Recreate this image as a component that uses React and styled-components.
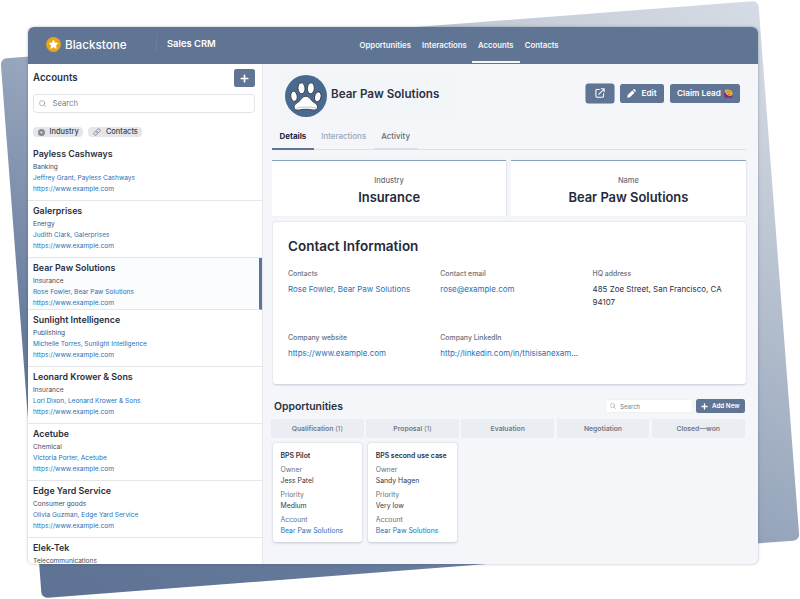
import React from 'react';
import styled, { createGlobalStyle, css } from 'styled-components';

const GlobalStyle = createGlobalStyle`
  * {
    box-sizing: border-box;
  }

  body {
    margin: 0;
    background: #fff;
    color: #2c3142;
    font-family: Inter, 'Liberation Sans', sans-serif;
    overflow: hidden;
  }

  h1, h2, h3, p, ul {
    margin: 0;
    padding: 0;
  }

  a {
    color: #2a70b5;
    text-decoration: none;
  }

  svg {
    display: block;
    flex: none;
  }
`;

const Stage = styled.div`
  position: relative;
  width: 800px;
  height: 599px;
  padding: 27px 42px 34px 28px;
  overflow: hidden;
`;

const Backdrop = styled.div`
  position: absolute;
  left: 20px;
  top: 29px;
  width: 760px;
  height: 541px;
  border-radius: 6px;
  background: linear-gradient(
    216deg,
    #d6dce5 0%,
    #cad1dc 13%,
    #b5bfce 28%,
    #97a6bd 50%,
    #667a9c 76%,
    #5e7294 100%
  );
  transform: rotate(-4.38deg);
`;

const Window = styled.div`
  position: relative;
  display: flex;
  flex-direction: column;
  width: 729.5px;
  height: 537px;
  border-radius: 6px;
  overflow: hidden;
  background: #f4f6fa;
  box-shadow: 0 0 3px rgba(40, 50, 70, 0.35);
`;

const Header = styled.header`
  display: flex;
  flex: none;
  height: 37px;
  padding-left: 18px;
  background: #607494;
  color: #fff;
`;

const Brand = styled.div`
  display: flex;
  align-items: center;
  gap: 4px;
  width: 110px;
  height: 35px;
  font-size: 11.7px;
  font-weight: 500;
`;

const AppName = styled.div`
  height: 19px;
  width: 204px;
  margin-top: 7px;
  margin-left: -0.5px;
  padding-left: 10.5px;
  border-left: 1px solid #6b7e9d;
  font-size: 9.4px;
  font-weight: 600;
  line-height: 19px;
`;

const Nav = styled.nav`
  display: flex;
  gap: 11.2px;
`;

const NavItem = styled.a`
  position: relative;
  color: #f5f7fa;
  font-size: 7.75px;
  font-weight: 600;
  line-height: 36px;

  ${({ $active }) =>
    $active &&
    css`
      &:after {
        content: '';
        position: absolute;
        left: -6px;
        right: -6px;
        bottom: 1px;
        height: 2px;
        background: #f4f6fa;
      }
    `}
`;

const Body = styled.div`
  display: flex;
  flex: 1;
  min-height: 0;
`;

const Sidebar = styled.aside`
  width: 234.5px;
  flex: none;
  overflow: hidden;
  background: #fff;
  border-right: 1px solid #e6e8ec;
`;

const SidebarTop = styled.div`
  padding: 5px 7px 0 5px;
`;

const SidebarHeading = styled.div`
  display: flex;
  align-items: center;
  justify-content: space-between;
  height: 18px;

  h2 {
    margin-top: -1px;
    font-size: 9.7px;
    font-weight: 600;
  }
`;

const Button = styled.button`
  display: flex;
  align-items: center;
  justify-content: center;
  gap: ${({ $gap }) => $gap || 5}px;
  width: ${({ $width }) => $width}px;
  height: ${({ $height }) => $height || 18.5}px;
  padding: 0;
  border: none;
  border-radius: 2.5px;
  background: #607494;
  color: #fff;
  font-family: inherit;
  font-size: ${({ $small }) => ($small ? 6.3 : 8.2)}px;
  font-weight: 600;
  box-shadow: ${({ $ring }) => ($ring ? '0 0 0 0.5px #4f6c97' : 'none')};
`;

const SearchBox = styled.div`
  display: flex;
  align-items: center;
  width: ${({ $small }) => ($small ? '88.5px' : '100%')};
  height: ${({ $small }) => ($small ? 14.5 : 19)}px;
  margin-top: ${({ $small }) => ($small ? 0 : 7)}px;
  padding-left: ${({ $small }) => ($small ? 4 : 5)}px;
  gap: ${({ $small }) => ($small ? 4.5 : 6)}px;
  border: 1px solid ${({ $small }) => ($small ? '#f0f1f4' : '#e2e4e8')};
  border-radius: 3.5px;
  background: #fff;
  color: #7b7f88;
  font-size: ${({ $small }) => ($small ? 6.1 : 7.7)}px;
`;

const Pills = styled.div`
  display: flex;
  gap: 5px;
  margin-top: 14px;
`;

const Pill = styled.span`
  display: flex;
  align-items: center;
  gap: 5px;
  height: 10px;
  padding: 0 4.5px;
  border-radius: 4px;
  background: #e5e6e9;
  color: #3f4451;
  font-size: 7.45px;
  font-weight: 500;
  line-height: 10px;
`;

const AccountList = styled.ul`
  list-style: none;
  margin-top: 6.5px;
`;

const AccountItem = styled.li`
  height: ${({ $active }) => ($active ? 52.5 : 57)}px;
  padding: 3px 5px 0;
  border-bottom: 1px solid #e4e6ea;
  font-size: 6.55px;
  line-height: 11px;
  color: #474c59;
  ${({ $active }) =>
    $active &&
    css`
      background: #fafcfe;
      border-right: 3px solid #607494;
    `}

  h3 {
    margin-bottom: 2px;
    font-size: 8.85px;
    font-weight: 600;
    line-height: 13px;
    color: #2a2f40;
  }

  a {
    display: block;
  }
`;

const Main = styled.main`
  flex: 1;
  min-width: 0;
  padding: 5px 12px 0 9.5px;
`;

const Profile = styled.div`
  display: flex;
  align-items: center;
  justify-content: space-between;
  height: 52px;
  padding-right: 5.5px;
`;

const Company = styled.div`
  display: flex;
  align-items: center;
  gap: 4px;
  width: 174px;
  height: 48px;
  margin: 2px 0 0 7px;
  padding-left: 6px;
  background: #f3f6f9;

  h1 {
    margin-top: -5px;
    font-size: 11.65px;
    font-weight: 600;
    white-space: nowrap;
  }
`;

const Actions = styled.div`
  display: flex;
  align-items: center;
  gap: 6px;
  margin-bottom: 3.5px;
`;

const Tabs = styled.div`
  display: flex;
  height: 29px;
  border-bottom: 1px solid #dcdfe5;
`;

const Tab = styled.div`
  height: 29px;
  padding: 8px 7.5px 0;
  border-bottom: ${({ $active }) =>
    $active ? '2px solid #607494' : '1px solid transparent'};
  color: ${({ $active, $muted }) =>
    $active ? '#20263a' : $muted ? '#99a5b8' : '#666b76'};
  font-size: 7.95px;
  font-weight: ${({ $active }) => ($active ? 700 : 500)};
  line-height: 15px;
  ${({ $hover }) =>
    $hover &&
    css`
      border-bottom: 2px solid #dcdee3;
    `}
`;

const Stats = styled.div`
  display: flex;
  gap: 5px;
  margin-top: 10px;
`;

const Stat = styled.div`
  flex: 1;
  height: 55.5px;
  padding-top: 12.5px;
  border-top: 1px solid #8aa4bf;
  background: #fff;
  box-shadow: 1px 0 1px #e4e8ee;
  text-align: center;

  p {
    color: #6a6f7a;
    font-size: 7.5px;
    font-weight: 500;
    line-height: 13px;
  }

  h2 {
    margin-top: 1.5px;
    font-size: 12.9px;
    font-weight: 600;
    line-height: 19px;
    color: #252a3a;
  }
`;

const ContactCard = styled.section`
  height: 162px;
  margin: 6.5px 0 0 1px;
  padding: 14.5px 15px 0;
  border-radius: 3px;
  background: #fff;
  box-shadow: 0 0.5px 2px rgba(60, 80, 110, 0.25);

  h2 {
    font-size: 13.5px;
    font-weight: 600;
    line-height: 18px;
    color: #252a3a;
  }
`;

const Fields = styled.div`
  display: grid;
  grid-template-columns: 152.3px 152.3px 1fr;
  grid-auto-rows: 64px;
  margin-top: 13.5px;
`;

const Field = styled.div`
  font-size: 7.93px;
  line-height: 13px;
  white-space: ${({ $nowrap }) => ($nowrap ? 'nowrap' : 'normal')};

  span {
    display: block;
    margin-bottom: 3px;
    color: #6a6f7a;
    font-size: 6.9px;
    font-weight: 500;
    line-height: 12px;
  }
`;

const BoardHeader = styled.div`
  display: flex;
  align-items: center;
  gap: 3px;
  margin-top: 14.5px;
  padding: 0 1px 0 2px;
  height: 15px;

  h2 {
    flex: 1;
    font-size: 10.4px;
    font-weight: 600;
  }
`;

const Board = styled.div`
  display: grid;
  grid-template-columns: repeat(5, 1fr);
  gap: 2.7px;
  margin: 5.5px 1px 0 -1px;
`;

const StageTitle = styled.div`
  height: 19px;
  border-radius: 2px;
  background: #eaedf2;
  color: #747983;
  font-size: 6.8px;
  font-weight: 600;
  line-height: 19px;
  text-align: center;

  small {
    font-size: 6.8px;
    font-weight: 400;
  }
`;

const Deal = styled.article`
  height: 99px;
  margin: 5px 2px 0;
  padding: 6.5px 7.5px;
  border-radius: 3px;
  background: #fff;
  box-shadow: 0 0.5px 2.5px rgba(60, 75, 100, 0.28);
  font-size: 6.87px;
  line-height: 11px;
  white-space: nowrap;

  h3 {
    font-size: 6.87px;
    font-weight: 600;
    line-height: 11px;
  }

  p {
    margin-top: 3px;
    color: #6a6f7a;
  }

  div {
    color: #363b49;
  }
`;

const StarLogo = () => (
  <svg width="15" height="15" viewBox="0 0 15 15">
    <circle cx="7.5" cy="7.5" r="7.4" fill="#e7a51b" />
    <path
      d="M7.5 3.1l1.35 2.8 3.05.42-2.22 2.13.55 3.05L7.5 10.02 4.77 11.5l.55-3.05L3.1 6.32l3.05-.42z"
      fill="#fff"
      stroke="#fff"
      strokeWidth=".6"
      strokeLinejoin="round"
    />
  </svg>
);

const PawLogo = () => (
  <svg width="42" height="42" viewBox="0 0 42 42">
    <circle cx="21" cy="21" r="21" fill="#4a698f" />
    <g fill="#fff" stroke="#353b46" strokeWidth=".9">
      <ellipse cx="16.5" cy="13.3" rx="3.5" ry="5.5" transform="rotate(-4 16.5 13.3)" />
      <ellipse cx="25.800" cy="13.3" rx="3.5" ry="5.5" transform="rotate(4 25.8 13.3)" />
      <ellipse cx="9" cy="21.3" rx="3.2" ry="5.1" transform="rotate(-8 9 21.3)" />
      <ellipse cx="32.8" cy="21.8" rx="3.2" ry="5" transform="rotate(14 32.8 21.8)" />
      <path d="M20.8 21.3c2.8 0 4 2 5.8 4.2 2.1 2.5 6.2 3.4 5.9 6.7-.3 3.4-4 3-6.5 2.5-3.5-.6-7-.6-10.4 0-2.5.5-6.3.8-6.5-2.5-.2-3.3 3.8-4.2 5.9-6.7 1.8-2.2 3-4.2 5.8-4.2z" />
    </g>
    <path d="M11.5 33.200c6-1.600 13-1.600 19.500 0" fill="none" stroke="#c3c6cb" strokeWidth="1" />
  </svg>
);

const SearchIcon = ({ size }) => (
  <svg width={size} height={size} viewBox="0 0 16 16" fill="none" stroke="#989da6" strokeWidth="1.5" strokeLinecap="round">
    <circle cx="6.7" cy="6.7" r="5.5" />
    <path d="M10.8 10.8L15 15" />
  </svg>
);

const PlusIcon = ({ size }) => (
  <svg width={size} height={size} viewBox="0 0 8 8" stroke="#fff" strokeWidth="1.5" strokeLinecap="round">
    <path d="M4 1.1v5.800M1.1 4h5.800" />
  </svg>
);

const DropIcon = () => (
  <svg width="7" height="7" viewBox="0 0 7 7">
    <circle cx="3.5" cy="3.5" r="3.5" fill="#868a93" />
    <path d="M1.9 2.7h3.2L3.5 5z" fill="#e5e6e9" />
  </svg>
);

const LinkIcon = () => (
  <svg width="8" height="8" viewBox="0 0 24 24" fill="none" stroke="#858992" strokeWidth="3" strokeLinecap="round">
    <path d="M10 13a5 5 0 0 0 7.5.5l3-3a5 5 0 0 0-7-7l-2 2" />
    <path d="M14 11a5 5 0 0 0-7.5-.5l-3 3a5 5 0 0 0 7 7l2-2" />
  </svg>
);

const ShareIcon = () => (
  <svg width="10" height="10" viewBox="0 0 10 10" fill="none" stroke="#fff" strokeWidth="1.05" strokeLinecap="round" strokeLinejoin="round">
    <path d="M4.3 1.5H1.8c-.5 0-.9.4-.9.9v5.9c0 .5.4.9.9.9h5.9c.5 0 .9-.4.9-.9V5.800" />
    <path d="M3.8 6.3L9 1M6.2.8h3v3" />
  </svg>
);

const PencilIcon = () => (
  <svg width="9" height="9" viewBox="0 0 9 9" fill="#fff">
    <path d="M.2 8.800l.5-2.700L5.300 1.500l2.200 2.200-4.600 4.600zM5.900.9l.5-.5c.4-.4.9-.4 1.300 0l.9.9c.4.4.4.9 0 1.300l-.5.5z" />
  </svg>
);

const ClaimIcon = () => (
  <svg width="9" height="9" viewBox="0 0 9 9">
    <path d="M.3 3.400l1.500-.2 2.600 3 3.800-.5.4 2.300-1.500.8H1.400L.3 7.400z" fill="#7c2a7e" />
    <path d="M.9.8L4.300.4l3 1.100 1.300 2.500-.4 2.300-2.500.9-2.800-1.400-1.700-2.600z" fill="#eeb13c" />
    <path d="M2.500 2.500l2.200 1.600M4.300 1.500l2.500 2M4 5.300l2.500.2" stroke="#9a5524" strokeWidth=".6" />
  </svg>
);

const accounts = [
  ['Payless Cashways', 'Banking', 'Jeffrey Grant, Payless Cashways'],
  ['Galerprises', 'Energy', 'Judith Clark, Galerprises'],
  ['Bear Paw Solutions', 'Insurance', 'Rose Fowler, Bear Paw Solutions'],
  ['Sunlight Intelligence', 'Publishing', 'Michelle Torres, Sunlight Intelligence'],
  ['Leonard Krower & Sons', 'Insurance', 'Lori Dixon, Leonard Krower & Sons'],
  ['Acetube', 'Chemical', 'Victoria Porter, Acetube'],
  ['Edge Yard Service', 'Consumer goods', 'Olivia Guzman, Edge Yard Service'],
  ['Elek-Tek', 'Telecommunications'],
];

const stages = [
  { name: 'Qualification', deal: { title: 'BPS Pilot', owner: 'Jess Patel', priority: 'Medium' } },
  { name: 'Proposal', deal: { title: 'BPS second use case', owner: 'Sandy Hagen', priority: 'Very low' } },
  { name: 'Evaluation' },
  { name: 'Negotiation' },
  { name: 'Closed—won' },
];

const AccountsSidebar = () => (
  <Sidebar>
    <SidebarTop>
      <SidebarHeading>
        <h2>Accounts</h2>
        <Button $width={20.5} $height={18}>
          <PlusIcon size={9} />
        </Button>
      </SidebarHeading>
      <SearchBox>
        <SearchIcon size={7.5} />
        Search
      </SearchBox>
      <Pills>
        <Pill>
          <DropIcon />
          Industry
        </Pill>
        <Pill>
          <LinkIcon />
          Contacts
        </Pill>
      </Pills>
    </SidebarTop>
    <AccountList>
      {accounts.map(([name, industry, contact]) => (
        <AccountItem key={name} $active={name === 'Bear Paw Solutions'}>
          <h3>{name}</h3>
          <p>{industry}</p>
          {contact && (
            <>
              <a href="#contact">{contact}</a>
              <a href="#site">https://www.example.com</a>
            </>
          )}
        </AccountItem>
      ))}
    </AccountList>
  </Sidebar>
);

const Opportunities = () => (
  <>
    <BoardHeader>
      <h2>Opportunities</h2>
      <SearchBox $small>
        <SearchIcon size={6} />
        Search
      </SearchBox>
      <Button $width={48.5} $height={14.5} $gap={4} $small>
        <PlusIcon size={7} />
        Add New
      </Button>
    </BoardHeader>
    <Board>
      {stages.map(({ name, deal }) => (
        <div key={name}>
          <StageTitle>
            {name} {deal && <small>(1)</small>}
          </StageTitle>
          {deal && (
            <Deal>
              <h3>{deal.title}</h3>
              <p>Owner</p>
              <div>{deal.owner}</div>
              <p>Priority</p>
              <div>{deal.priority}</div>
              <p>Account</p>
              <a href="#account">Bear Paw Solutions</a>
            </Deal>
          )}
        </div>
      ))}
    </Board>
  </>
);

const App = () => (
  <Stage>
    <GlobalStyle />
    <Backdrop />
    <Window>
      <Header>
        <Brand>
          <StarLogo />
          Blackstone
        </Brand>
        <AppName>Sales CRM</AppName>
        <Nav>
          <NavItem>Opportunities</NavItem>
          <NavItem>Interactions</NavItem>
          <NavItem $active>Accounts</NavItem>
          <NavItem>Contacts</NavItem>
        </Nav>
      </Header>
      <Body>
        <AccountsSidebar />
        <Main>
          <Profile>
            <Company>
              <PawLogo />
              <h1>Bear Paw Solutions</h1>
            </Company>
            <Actions>
              <Button $width={28} $height={19} $ring>
                <ShareIcon />
              </Button>
              <Button $width={44}>
                <PencilIcon />
                Edit
              </Button>
              <Button $width={70} $gap={3}>
                Claim Lead
                <ClaimIcon />
              </Button>
            </Actions>
          </Profile>
          <Tabs>
            <Tab $active>Details</Tab>
            <Tab $muted>Interactions</Tab>
            <Tab $hover>Activity</Tab>
          </Tabs>
          <Stats>
            <Stat>
              <p>Industry</p>
              <h2>Insurance</h2>
            </Stat>
            <Stat>
              <p>Name</p>
              <h2>Bear Paw Solutions</h2>
            </Stat>
          </Stats>
          <ContactCard>
            <h2>Contact Information</h2>
            <Fields>
              <Field>
                <span>Contacts</span>
                <a href="#contact">Rose Fowler, Bear Paw Solutions</a>
              </Field>
              <Field>
                <span>Contact email</span>
                <a href="#email">rose@example.com</a>
              </Field>
              <Field>
                <span>HQ address</span>
                485 Zoe Street, San Francisco, CA 94107
              </Field>
              <Field>
                <span>Company website</span>
                <a href="#site">https://www.example.com</a>
              </Field>
              <Field $nowrap>
                <span>Company LinkedIn</span>
                <a href="#linkedin">http://linkedin.com/in/thisisanexam</a>...
              </Field>
            </Fields>
          </ContactCard>
          <Opportunities />
        </Main>
      </Body>
    </Window>
  </Stage>
);

export default App;
